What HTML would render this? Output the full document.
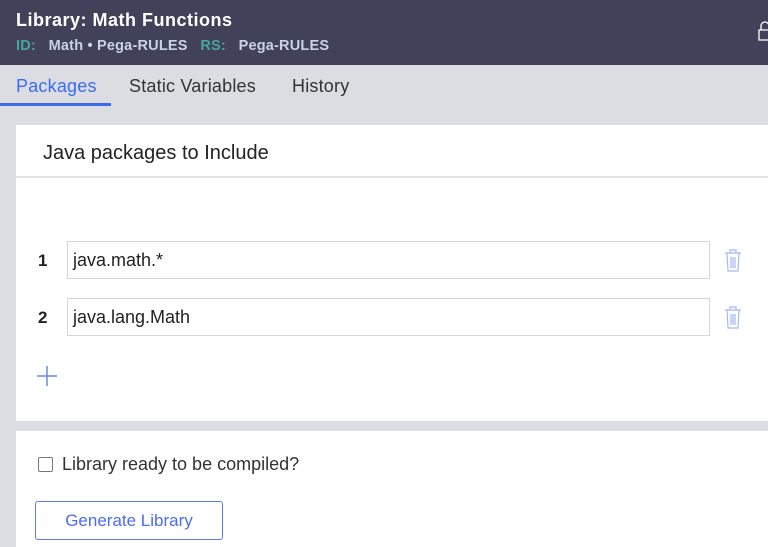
<!DOCTYPE html>
<html><head><style>
body{margin:0;width:768px;height:547px;overflow:hidden;background:#dcdde2;font-family:"Liberation Sans",sans-serif;position:relative}
.hd{position:absolute;left:0;top:0;width:768px;height:65px;background:#41425a}
.t1{position:absolute;left:16px;top:10px;color:#fff;font-weight:bold;font-size:18px;letter-spacing:0.5px}
.t2{position:absolute;left:16px;top:38px;font-weight:bold;font-size:14.5px;color:#c9d2e6;letter-spacing:0.2px}
.t2 .g{color:#4aa3a0}
.tab{position:absolute;top:76px;font-size:18px;color:#333;letter-spacing:0.2px}
.ul{position:absolute;left:0;top:103px;width:111px;height:3px;background:#3b6cf0}
.p{position:absolute;left:16px;width:752px;background:#fff}
.inp{position:absolute;left:67px;border:1px solid #d5d5d5;font-size:18px;color:#222;line-height:36px;padding-left:5px;box-sizing:border-box;width:643px;height:38px}
.n{position:absolute;left:38px;font-weight:bold;font-size:17px;color:#222}
</style></head><body>
<div class="hd">
<div class="t1">Library: Math Functions</div>
<div class="t2"><span class="g">ID:</span>&nbsp;&nbsp; Math • Pega-RULES &nbsp;&nbsp;<span class="g">RS:</span>&nbsp;&nbsp; Pega-RULES</div>
<svg style="position:absolute;left:758px;top:20px" width="12" height="22"><path d="M3 10V6a4 4 0 0 1 8 0v4M1 10h12v10H1z" fill="none" stroke="#fff" stroke-width="1.3"/></svg>
</div>
<div class="tab" style="left:16px;color:#3b6cf0">Packages</div>
<div class="tab" style="left:129px">Static Variables</div>
<div class="tab" style="left:292px">History</div>
<div class="ul"></div>
<div class="p" style="top:125px;height:296px">
<div style="position:absolute;left:27px;top:17px;font-size:20px;color:#222">Java packages to Include</div>
<div style="position:absolute;left:0;top:51px;width:752px;height:2px;background:#e4e4e4"></div>
</div>
<div class="n" style="top:251px">1</div>
<div class="inp" style="top:241px">java.math.*</div>
<div class="n" style="top:308px">2</div>
<div class="inp" style="top:298px">java.lang.Math</div>
<svg style="position:absolute;left:723px;top:248px" width="20" height="26" viewBox="0 0 20 26"><path d="M2 5h16M7 5V2h6v3M4 5l1 18h10l1-18M8 9v11M10 9v11M12 9v11" fill="none" stroke="#a8b8f5" stroke-width="1.2"/></svg>
<svg style="position:absolute;left:723px;top:305px" width="20" height="26" viewBox="0 0 20 26"><path d="M2 5h16M7 5V2h6v3M4 5l1 18h10l1-18M8 9v11M10 9v11M12 9v11" fill="none" stroke="#a8b8f5" stroke-width="1.2"/></svg>
<svg style="position:absolute;left:36px;top:365px" width="22" height="22"><path d="M11 1v20M1 11h20" stroke="#6a85f0" stroke-width="1.5"/></svg>
<div class="p" style="top:431px;height:116px"></div>
<div style="position:absolute;left:38px;top:457px;width:13px;height:13px;border:1.5px solid #777;border-radius:2px;background:#fff"></div>
<div style="position:absolute;left:62px;top:454px;font-size:18px;color:#333">Library ready to be compiled?</div>
<div style="position:absolute;left:35px;top:501px;width:186px;height:37px;border:1px solid #5b7cf0;border-radius:3px;color:#4a6cf0;font-size:17px;text-align:center;line-height:37px;background:#fff">Generate Library</div>
</body></html>
